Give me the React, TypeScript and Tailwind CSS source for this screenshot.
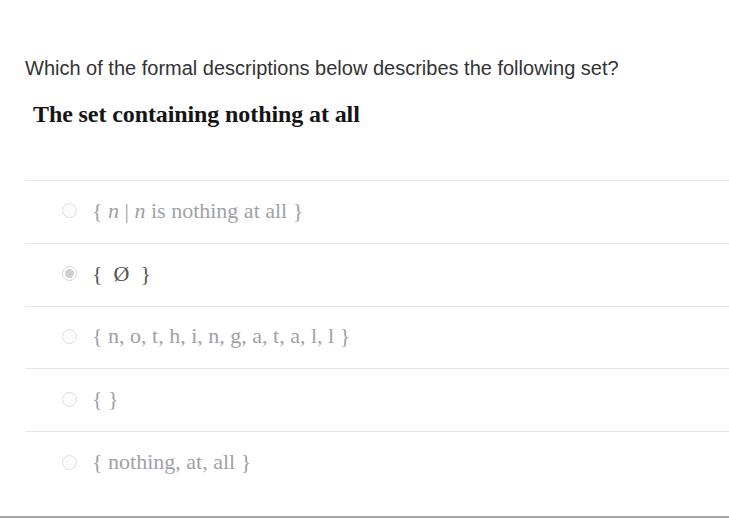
import React from 'react';

const options = [
  { key: 'a', label: <>{'{ '}<i>n</i>{' | '}<i>n</i>{' is nothing at all }'}</>, checked: false },
  { key: 'b', label: <>{'{\u00a0 Ø\u00a0 }'}</>, checked: true },
  { key: 'c', label: <>{'{ n, o, t, h, i, n, g, a, t, a, l, l }'}</>, checked: false },
  { key: 'd', label: <>{'{ }'}</>, checked: false },
  { key: 'e', label: <>{'{ nothing, at, all }'}</>, checked: false },
];

const Radio = ({ checked }: { checked: boolean }) => (
  <span
    className={`w-[15px] h-[15px] rounded-full border flex items-center justify-center shrink-0 ${
      checked ? 'border-[#d4d4d4] bg-white' : 'border-[#dedede] bg-[#fcfcfc]'
    }`}
  >
    {checked && <span className="w-[9px] h-[9px] rounded-full bg-[#cfcfcf]" />}
  </span>
);

export default function App() {
  return (
    <div className="w-[729px] h-[522px] bg-white relative overflow-hidden">
      <div className="pl-[25px] pt-[54px]">
        <p className="text-[20px] leading-[28px] text-[#333] font-['Liberation_Sans',Arial,sans-serif]">
          Which of the formal descriptions below describes the following set?
        </p>
        <div className="mt-[17px] ml-[8px] font-['Liberation_Serif','Times_New_Roman',serif] font-bold text-[24px] leading-[30px] text-[#151515] tracking-[-0.1px]">
          The set containing nothing at all
        </div>
        <div className="mt-[51px] border-t border-[#e8e8e8]">
          {options.map((o, i) => (
            <div
              key={o.key}
              className={`h-[62.75px] flex items-center pl-[37px] gap-[15px] pb-[2px] ${
                i < options.length - 1 ? 'border-b border-[#e6e6e6]' : ''
              }`}
            >
              <Radio checked={o.checked} />
              <span
                className={`font-['Liberation_Serif','Times_New_Roman',serif] text-[22px] leading-none ${
                  o.checked ? 'text-[#555]' : 'text-[#9ea2a6]'
                }`}
              >
                {o.label}
              </span>
            </div>
          ))}
        </div>
      </div>
      <div className="absolute left-0 right-0 top-[516px] h-[2px] bg-[#a8a8a8]" />
    </div>
  );
}
